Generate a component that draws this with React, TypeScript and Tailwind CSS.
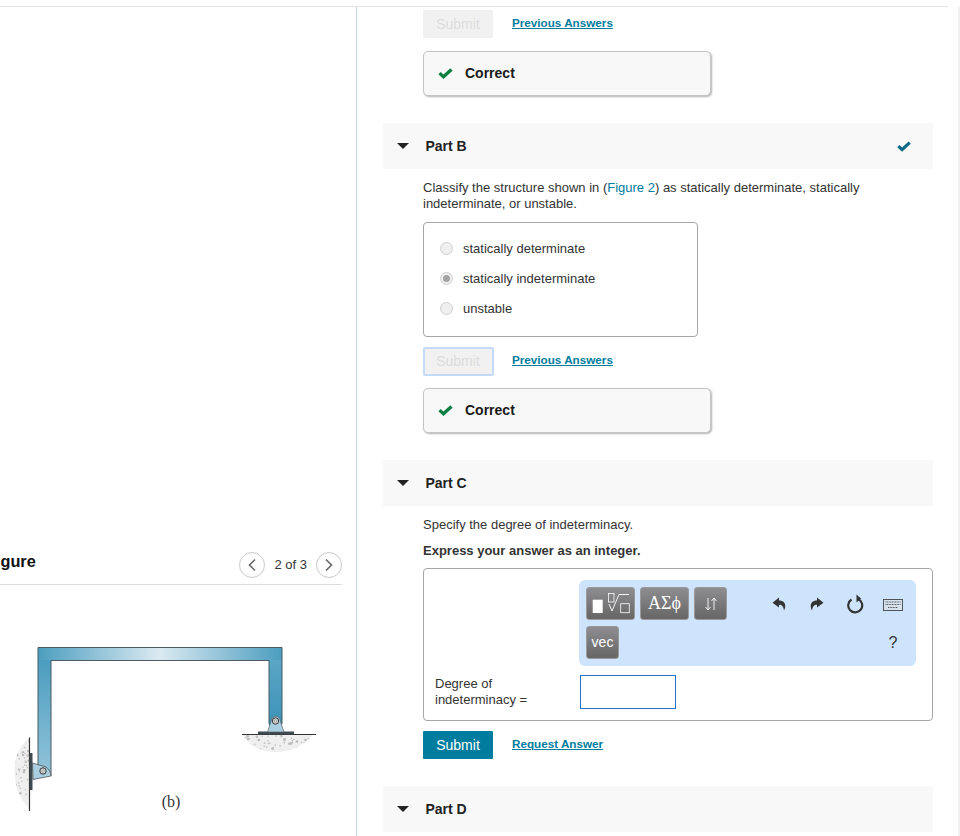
import React from 'react';

const LINK = 'text-[11.7px] font-bold text-[#007c9e] underline';

const CheckIcon = ({ color, className }: { color: string; className: string }) => (
  <svg viewBox="0 0 16 12" className={className}>
    <path d="M1.5 5.6 L5.8 9.6 L14.5 1.6" fill="none" stroke={color} strokeWidth="3.6" />
  </svg>
);

const SubmitRow = ({ focused, link, active }: { focused?: boolean; link: string; active?: boolean }) => (
  <div className="flex items-start">
    <div
      className={
        active
          ? 'w-[70px] h-[28px] flex items-center justify-center rounded-[1px] bg-[#007c9e] text-white text-[14px]'
          : focused
            ? 'w-[71px] h-[29px] -ml-[0.5px] flex items-center justify-center border-2 border-[#c5daf8] bg-[#f1f1f1] text-[#dcdcdc] text-[14px] rounded-[2px]'
            : 'w-[70px] h-[28px] flex items-center justify-center rounded-[2px] bg-[#f1f1f1] text-[#dcdcdc] text-[14px]'
      }
    >
      Submit
    </div>
    <a className={`${LINK} ${focused ? 'ml-[18.5px]' : 'ml-[19px]'} mt-[5px] leading-[16px]`}>{link}</a>
  </div>
);

const CorrectBox = ({ className }: { className: string }) => (
  <div className={`w-[288px] h-[45px] flex items-center rounded-[5px] border border-[#c4c4c4] bg-[#f8f8f8] shadow-[1px_1px_2px_rgba(0,0,0,0.3)] ${className}`}>
    <CheckIcon color="#0f7f43" className="w-[15px] h-[11px] ml-[14px]" />
    <span className="ml-[12px] text-[14px] font-bold text-[#1a1a1a]">Correct</span>
  </div>
);

const PartHeader = ({ name, done, className }: { name: string; done?: boolean; className: string }) => (
  <div className={`w-[550px] h-[46px] flex items-center bg-[#f8f8f8] ${className}`}>
    <div className="ml-[14px] w-0 h-0 border-x-[6px] border-x-transparent border-t-[6px] border-t-[#222222]" />
    <span className="ml-[16.5px] text-[14px] font-bold text-[#222222]">{name}</span>
    {done && <CheckIcon color="#0a6a86" className="w-[14px] h-[11px] ml-auto mr-[22px]" />}
  </div>
);

const RadioRow = ({ label, checked }: { label: string; checked?: boolean }) => (
  <div className="h-[30px] flex items-center">
    <div className="w-[13px] h-[13px] -mt-px rounded-full border border-[#cfcfcf] bg-[#efefef] flex items-center justify-center ml-[15.5px]">
      {checked && <div className="w-[7px] h-[7px] rounded-full bg-[#a3a3a3]" />}
    </div>
    <span className="ml-[10.5px] text-[13px] text-[#333333]">{label}</span>
  </div>
);

const ToolButton = ({ className, children }: { className: string; children: React.ReactNode }) => (
  <div className={`h-[33px] rounded-[3px] border border-[#9a9a9a] bg-gradient-to-b from-[#8e8e92] to-[#666666] flex items-center justify-center text-white ${className}`}>
    {children}
  </div>
);

// stipple of the concrete supports
const dots = (x0: number, y0: number, w: number, h: number, n: number) =>
  Array.from({ length: n }, (_, i) => {
    const a = Math.sin(i * 12.9898 + 1.3) * 43758.5453;
    const b = Math.sin(i * 78.233 + 4.1) * 12543.1234;
    return {
      x: x0 + (a - Math.floor(a)) * w,
      y: y0 + (b - Math.floor(b)) * h,
      r: i % 3 === 0 ? 1.3 : 0.8,
    };
  });

const Figure = () => (
  <svg width="356" height="220" viewBox="0 620 356 220" className="block">
    <defs>
      <linearGradient id="beam" x1="37" x2="282" y1="0" y2="0" gradientUnits="userSpaceOnUse">
        <stop offset="0" stopColor="#4b9dbf" />
        <stop offset="0.5" stopColor="#dbeaf2" />
        <stop offset="1" stopColor="#4b9dbf" />
      </linearGradient>
      <linearGradient id="leftCol" x1="0" x2="0" y1="660" y2="776" gradientUnits="userSpaceOnUse">
        <stop offset="0" stopColor="#4b9dbf" />
        <stop offset="1" stopColor="#93c4da" />
      </linearGradient>
      <linearGradient id="rightCol" x1="0" x2="0" y1="660" y2="725" gradientUnits="userSpaceOnUse">
        <stop offset="0" stopColor="#5aa6c6" />
        <stop offset="1" stopColor="#3c93b8" />
      </linearGradient>
      <clipPath id="wallClip">
        <path d="M29 738 C20 745 14 757 14.5 772 C15 788 21 801 29 808 Z" />
      </clipPath>
      <clipPath id="floorClip">
        <path d="M243 735 H312 C306 744 292 752 275 752 C260 752 248 745 243 735 Z" />
      </clipPath>
    </defs>
    {/* frame */}
    <rect x="38" y="647.5" width="244" height="13" fill="url(#beam)" />
    <rect x="38" y="660" width="13" height="116" fill="url(#leftCol)" />
    <rect x="269" y="660" width="13" height="66" fill="url(#rightCol)" />
    <path d="M38 772 V647.5 H282 V724 M269 724 V660.5 H51 V776" fill="none" stroke="#4d5a60" strokeWidth="1" />
    {/* wall support */}
    <g clipPath="url(#wallClip)">
      <rect x="13" y="737" width="17" height="72" fill="#efefef" />
      {dots(14, 738, 15, 70, 48).map((d, i) => (
        <circle key={i} cx={d.x} cy={d.y} r={d.r} fill="#bdbdbd" />
      ))}
    </g>
    <line x1="29.5" y1="737.5" x2="29.5" y2="811" stroke="#333333" strokeWidth="1.2" />
    <rect x="29.5" y="753" width="3" height="37" fill="#3f4a50" />
    <path d="M32.5 763 L46 767 C49 769 51 773 51 776 L33 779.5 Z" fill="#a9cfe0" stroke="#444444" strokeWidth="0.7" />
    <circle cx="43" cy="771" r="3.2" fill="#d8d8d8" stroke="#333333" strokeWidth="1" />
    <circle cx="43" cy="771" r="1.2" fill="#ffffff" stroke="#555555" strokeWidth="0.5" />
    {/* floor support */}
    <g clipPath="url(#floorClip)">
      <rect x="242" y="735" width="72" height="18" fill="#efefef" />
      {dots(244, 736, 68, 16, 48).map((d, i) => (
        <circle key={i} cx={d.x} cy={d.y} r={d.r} fill="#bdbdbd" />
      ))}
    </g>
    <line x1="242" y1="734.5" x2="316" y2="734.5" stroke="#333333" strokeWidth="1.2" />
    <rect x="258" y="731.5" width="36" height="3" fill="#3f4a50" />
    <path d="M267.5 732 L271.5 720 C273 715 279 715 280 720 L284 732 Z" fill="#a9cfe0" stroke="#555555" strokeWidth="0.6" />
    <circle cx="275.5" cy="721" r="3.2" fill="#d8d8d8" stroke="#333333" strokeWidth="1" />
    <circle cx="275.5" cy="721" r="1.2" fill="#ffffff" stroke="#555555" strokeWidth="0.5" />
    <text x="171" y="807" textAnchor="middle" fontFamily="'Liberation Serif', serif" fontSize="16" fill="#333333">(b)</text>
  </svg>
);

export default function App() {
  return (
    <div className="w-[960px] h-[836px] overflow-hidden bg-white font-['Liberation_Sans',Arial,sans-serif] pt-[6px]">
      <div className="w-[948px] h-px bg-[#e3e3e3]" />
      <div className="flex h-[829px]">
        {/* figure panel */}
        <div className="w-[357px] shrink-0 border-r border-[#c2d6e4] overflow-hidden pt-[546px]">
          <div className="w-[342px] h-[32px] border-b border-[#dcdcdc] flex items-start">
            <span className="-ml-[14px] -mt-px text-[16.3px] font-bold leading-[18px] text-[#111111]">Figure</span>
            <div className="ml-auto flex items-center -mt-[1px]">
              <div className="w-[26px] h-[26px] rounded-full border border-[#c9c9c9] flex items-center justify-center">
                <svg viewBox="0 0 10 14" className="w-[10px] h-[14px]"><path d="M8 1.5 L2.5 7 L8 12.5" fill="none" stroke="#666666" strokeWidth="1.6" /></svg>
              </div>
              <span className="mx-[9px] text-[13px] text-[#333333]">2 of 3</span>
              <div className="w-[26px] h-[26px] rounded-full border border-[#c9c9c9] flex items-center justify-center">
                <svg viewBox="0 0 10 14" className="w-[10px] h-[14px]"><path d="M2 1.5 L7.5 7 L2 12.5" fill="none" stroke="#666666" strokeWidth="1.6" /></svg>
              </div>
            </div>
          </div>
          <div className="mt-[35px]"><Figure /></div>
        </div>

        {/* question panel */}
        <div className="w-[577px] shrink-0 pl-[26px] pt-[3px]">
          <div className="ml-[40px]">
            <SubmitRow link="Previous Answers" />
            <CorrectBox className="mt-[13px]" />
          </div>
          <PartHeader name="Part B" done className="mt-[27px]" />
          <div className="ml-[40px] w-[480px] mt-[11px] text-[13px] leading-[16px] text-[#333333]">
            Classify the structure shown in (<span className="text-[#007c9e]">Figure 2</span>) as statically determinate, statically indeterminate, or unstable.
          </div>
          <div className="ml-[40px]">
            <div className="w-[275px] h-[115px] mt-[10px] py-[10px] pt-[11px] rounded-[4px] border border-[#a6a6a6]">
              <RadioRow label="statically determinate" />
              <RadioRow label="statically indeterminate" checked />
              <RadioRow label="unstable" />
            </div>
            <div className="mt-[10px]"><SubmitRow link="Previous Answers" focused /></div>
            <CorrectBox className="mt-[12px]" />
          </div>
          <PartHeader name="Part C" className="mt-[27px]" />
          <div className="ml-[40px]">
            <div className="mt-[11px] text-[13px] leading-[16px] text-[#333333]">Specify the degree of indeterminacy.</div>
            <div className="mt-[10px] text-[13px] leading-[16px] font-bold text-[#333333]">Express your answer as an integer.</div>
            <div className="w-[510px] h-[153px] mt-[9px] rounded-[4px] border border-[#a6a6a6] flex items-end pl-[11px] pb-[11px]">
              <div className="w-[144px] text-[13px] leading-[16px] text-[#333333] pb-[1px]">Degree of<br />indeterminacy =</div>
              <div className="flex flex-col">
                <div className="w-[337px] h-[86px] rounded-[6px] bg-[#cee3fc] pt-[7px] pl-[7px] mb-[9px]">
                  <div className="flex items-start">
                    <ToolButton className="w-[49px]">
                      <svg viewBox="1 1 47 31" className="w-[47px] h-[31px]">
                        <rect x="6.7" y="12.7" width="10" height="13.3" fill="#ffffff" />
                        <rect x="22.5" y="6.5" width="5.5" height="8.5" fill="none" stroke="#ffffff" strokeWidth="0.8" />
                        <path d="M23 17 L26 24 L33 7.5 H43" fill="none" stroke="#ffffff" strokeWidth="0.9" />
                        <rect x="34.7" y="16.7" width="8.6" height="9" fill="none" stroke="#ffffff" strokeWidth="0.8" />
                      </svg>
                    </ToolButton>
                    <ToolButton className="w-[49px] ml-[5px] text-[18px] font-['Liberation_Serif',serif]">ΑΣϕ</ToolButton>
                    <ToolButton className="w-[33px] ml-[5px]">
                      <svg viewBox="0 0 16 16" className="w-[16px] h-[16px]">
                        <path d="M5 2 V14 M2.5 11 L5 14 L7.5 11 M11 14 V2 M8.5 5 L11 2 L13.5 5" fill="none" stroke="#ffffff" strokeWidth="0.9" />
                      </svg>
                    </ToolButton>
                    <div className="ml-auto flex mr-[4px]">
                      <div className="w-[38px] h-[33px] flex items-center justify-center">
                        <svg viewBox="0.5 0 14 14" className="w-[14px] h-[14px]"><path d="M7.5 0.5 L1 5.8 L7.5 10.5 V7.8 C10.5 7.6 12 9.5 12.5 13.5 C15.5 8 13 3.6 7.5 3.6 Z" fill="#333333" /></svg>
                      </div>
                      <div className="w-[38px] h-[33px] flex items-center justify-center">
                        <svg viewBox="1.5 0 14 14" className="w-[14px] h-[14px]"><path d="M8.5 0.5 L15 5.8 L8.5 10.5 V7.8 C5.5 7.6 4 9.5 3.5 13.5 C0.5 8 3 3.6 8.5 3.6 Z" fill="#333333" /></svg>
                      </div>
                      <div className="w-[38px] h-[33px] flex items-center justify-center">
                        <svg viewBox="0 0 18 20" className="w-[18px] h-[20px]">
                          <path d="M5.5 5.5 A7 7 0 1 0 12 5" fill="none" stroke="#333333" strokeWidth="2.2" />
                          <path d="M10.5 0.5 L10.5 8.5 L15 4.5 Z" fill="#333333" />
                        </svg>
                      </div>
                      <div className="w-[38px] h-[33px] flex items-center justify-center">
                        <svg viewBox="0 0 20 12" className="w-[20px] h-[12px] mt-[2px]">
                          <rect x="0.5" y="0.5" width="19" height="11" fill="#d6e2ee" stroke="#444444" strokeWidth="0.9" />
                          <path d="M2.5 3 H17.5 M2.5 5.5 H17.5 M5 8.5 H15" stroke="#555555" strokeWidth="1.2" strokeDasharray="1 0.6" />
                        </svg>
                      </div>
                    </div>
                  </div>
                  <div className="flex items-start mt-[6px]">
                    <ToolButton className="w-[33px] text-[14px]">vec</ToolButton>
                    <div className="ml-auto mr-[4px] w-[38px] h-[33px] flex items-center justify-center text-[16px] text-[#333333]">?</div>
                  </div>
                </div>
                <div className="w-[96px] h-[34px] ml-[1px] border border-[#2f6cc6] bg-white" />
              </div>
            </div>
            <div className="mt-[10px]"><SubmitRow link="Request Answer" active /></div>
          </div>
          <PartHeader name="Part D" className="mt-[27px]" />
        </div>
        <div className="ml-[24px] w-[2px] h-full bg-[#f1f1f1]" />
      </div>
    </div>
  );
}
